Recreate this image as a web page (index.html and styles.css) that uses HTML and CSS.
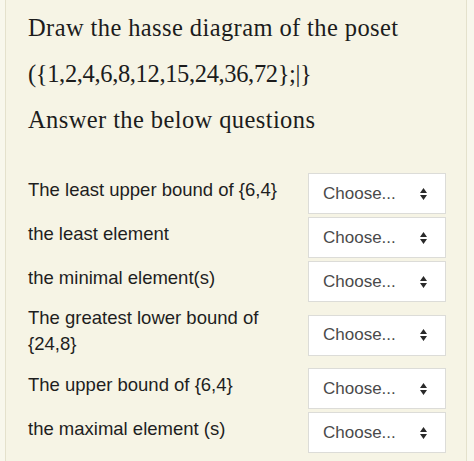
FILE: index.html
```html
<!DOCTYPE html>
<html>
<head>
<meta charset="utf-8">
<link rel="stylesheet" href="styles.css">
</head>
<body>
<div class="panel">
  <div class="question">
    <p>Draw the hasse diagram of the poset</p>
    <p class="set">({1,2,4,6,8,12,15,24,36,72};|}</p>
    <p>Answer the below questions</p>
  </div>
  <div class="rows">
    <div class="row"><div class="label">The least upper bound of {6,4}</div><div class="select"><span>Choose...</span><svg viewBox="0 0 7 12" class="arrows"><path d="M3.5 0 L7 5 L0 5 Z M3.5 12 L7 7 L0 7 Z"/></svg></div></div>
    <div class="row"><div class="label">the least element</div><div class="select"><span>Choose...</span><svg viewBox="0 0 7 12" class="arrows"><path d="M3.5 0 L7 5 L0 5 Z M3.5 12 L7 7 L0 7 Z"/></svg></div></div>
    <div class="row"><div class="label">the minimal element(s)</div><div class="select"><span>Choose...</span><svg viewBox="0 0 7 12" class="arrows"><path d="M3.5 0 L7 5 L0 5 Z M3.5 12 L7 7 L0 7 Z"/></svg></div></div>
    <div class="row"><div class="label">The greatest lower bound of<br>{24,8}</div><div class="select"><span>Choose...</span><svg viewBox="0 0 7 12" class="arrows"><path d="M3.5 0 L7 5 L0 5 Z M3.5 12 L7 7 L0 7 Z"/></svg></div></div>
    <div class="row"><div class="label">The upper bound of {6,4}</div><div class="select"><span>Choose...</span><svg viewBox="0 0 7 12" class="arrows"><path d="M3.5 0 L7 5 L0 5 Z M3.5 12 L7 7 L0 7 Z"/></svg></div></div>
    <div class="row"><div class="label">the maximal element (s)</div><div class="select"><span>Choose...</span><svg viewBox="0 0 7 12" class="arrows"><path d="M3.5 0 L7 5 L0 5 Z M3.5 12 L7 7 L0 7 Z"/></svg></div></div>
  </div>
</div>
</body>
</html>
```
FILE: styles.css
```css
html, body {
  margin: 0;
  padding: 0;
  background: #f8f7ec;
}
.panel {
  margin-left: 5px;
  width: 462px;
  height: 461px;
  box-sizing: border-box;
  border-left: 1px solid #e4e1cc;
  border-right: 1px solid #e4e1cc;
  background: #f6f4e5;
  padding: 5px 20px 0 22px;
}
.question p {
  margin: 0;
  font-family: "Liberation Serif", serif;
  font-size: 24.5px;
  letter-spacing: 0.4px;
  line-height: 46px;
  color: #1c1c1c;
}
.question p.set {
  letter-spacing: -0.35px;
}
.rows {
  margin-top: 26px;
  display: flex;
  flex-direction: column;
  gap: 3px;
}
.row {
  display: flex;
  align-items: center;
  justify-content: space-between;
}
.label {
  padding: 4px 0;
  font-family: "Liberation Sans", Arial, sans-serif;
  font-size: 18.5px;
  line-height: 26px;
  color: #1e1e1e;
}
.select {
  width: 138px;
  height: 41px;
  box-sizing: border-box;
  margin-top: 4px;
  margin-bottom: -4px;
  background: #ffffff;
  border: 1px solid #dcdcd8;
  display: flex;
  align-items: center;
  justify-content: space-between;
  padding: 0 18px 0 14px;
  font-family: "Liberation Sans", Arial, sans-serif;
  font-size: 17px;
  color: #4a4a4a;
}
.arrows {
  width: 7px;
  height: 12px;
  fill: #2a2a2a;
}
```
